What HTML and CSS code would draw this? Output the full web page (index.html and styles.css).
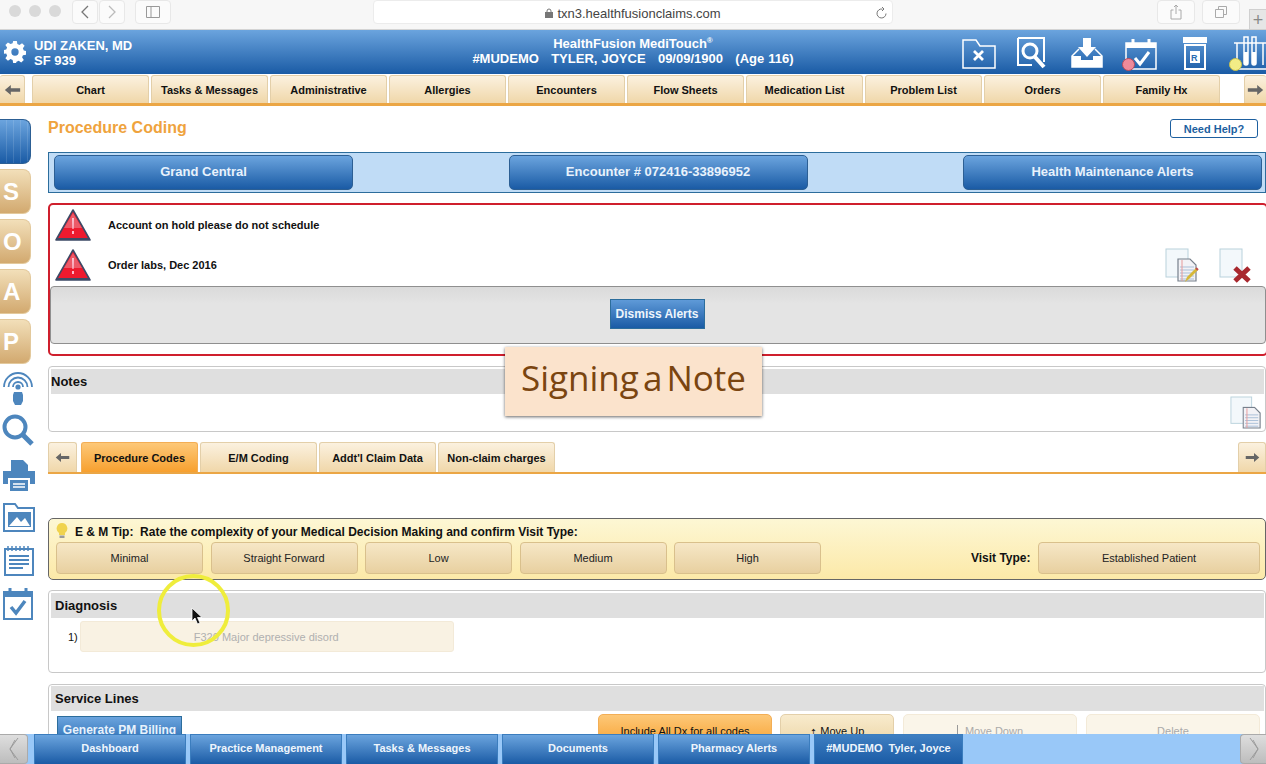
FILE: index.html
```html
<!DOCTYPE html>
<html lang="en">
<head>
  <meta charset="UTF-8" />
  <title>Procedure Coding</title>
  <link rel="stylesheet" href="styles.css">
</head>
<body>
<svg class="defs" width="0" height="0">
  <symbol id="arrow-left" viewBox="0 0 20 14"><path d="M8 1 1 7l7 6V9h11V5H8z"/></symbol>
  <symbol id="arrow-right" viewBox="0 0 20 14"><path d="M12 1l7 6-7 6V9H1V5h11z"/></symbol>
  <symbol id="warn" viewBox="0 0 36 32">
    <path d="M18 1 35 31H1z" fill="#ee1a2e" stroke="#3d4a66" stroke-width="1.600" stroke-linejoin="round"/>
    <path d="M18 4 27 19H9z" fill="#ec5a68"/>
    <path d="M2 29h32l1 2H1z" fill="#3d4a66"/>
    <path d="M17.200 9h1.600l-.3 11h-1zM17.200 22h1.600v3h-1.600z" fill="#fde"/>
  </symbol>
  <symbol id="page" viewBox="0 0 34 36">
    <rect x="1" y="1" width="22" height="28" fill="#f3f8fb" stroke="#b9d2dc"/>
  </symbol>
  <symbol id="sheet" viewBox="0 0 20 24">
    <path d="M1 1h12l6 6v16H1z" fill="#f2f2f6" stroke="#77808c" stroke-width="1.200"/>
    <path d="M3 9h14M3 12h14M3 15h14M3 18h14M3 21h14" stroke="#a9bfd8"/>
    <path d="M5 2v21" stroke="#e79a9a"/>
  </symbol>
</svg>

<div class="page">
  <div class="browser">
    <div class="dots"><i></i><i></i><i></i></div>
    <div class="chrome-btn nav-btn">
      <svg width="10" height="14" viewBox="0 0 10 14"><path d="M8 1 2 7l6 6" fill="none" stroke="#777" stroke-width="1.300"/></svg>
    </div>
    <div class="chrome-btn nav-btn next-btn">
      <svg width="10" height="14" viewBox="0 0 10 14"><path d="M2 1l6 6-6 6" fill="none" stroke="#bbb" stroke-width="1.300"/></svg>
    </div>
    <div class="chrome-btn side-btn">
      <svg width="14" height="12" viewBox="0 0 14 12"><path d="M.5.500h13v11H.5zM5 .5v11" fill="none" stroke="#999"/></svg>
    </div>
    <div class="url">
      <svg width="8" height="10" viewBox="0 0 8 10"><path d="M2 4V3a2 2 0 0 1 4 0v1" fill="none" stroke="#777"/><rect y="4" width="8" height="6" fill="#777"/></svg>
      <span>txn3.healthfusionclaims.com</span>
      <svg class="reload" width="12" height="14" viewBox="0 0 12 14"><path d="M10 7.500a4.500 4.500 0 1 1-3.500-4.400M6 1l2 2-2 2" fill="none" stroke="#777"/></svg>
    </div>
    <div class="chrome-btn share-btn">
      <svg width="12" height="16" viewBox="0 0 12 16"><path d="M3.500 6H1v9h10V6H8.500M6 10V1M4 3l2-2 2 2" fill="none" stroke="#aaa"/></svg>
    </div>
    <div class="chrome-btn tabs-btn">
      <svg width="12" height="12" viewBox="0 0 12 12"><path d="M.5 3.500h8v8h-8zM3.500 3.500v-3h8v8h-3" fill="none" stroke="#aaa"/></svg>
    </div>
    <div class="plus">+</div>
  </div>

  <header class="topbar">
    <div class="user">
      <svg width="22" height="22" viewBox="0 0 24 24"><path fill="#fff" fill-rule="evenodd" d="M10 0h4l.6 3.300 2.300 1L19.700 2.400l2.800 2.800-1.900 2.800 1 2.300L24 10.900v4l-3.300.6-1 2.300 1.900 2.800-2.800 2.800-2.800-1.900-2.300 1L13.100 24H10l-.6-3.300-2.300-1-2.800 1.900-2.800-2.800 1.900-2.800-1-2.300L-.900 14v-4l3.300-.6 1-2.300L1.500 4.300l2.800-2.800 2.800 1.900 2.300-1zM12 8a4 4 0 1 0 0 8 4 4 0 0 0 0-8z"/></svg>
      <div class="user-name">UDI ZAKEN, MD<br>SF 939</div>
    </div>
    <div class="patient">
      <div>HealthFusion MediTouch<sup>®</sup></div>
      <div class="patient-line">#MUDEMO&nbsp;&nbsp; TYLER, JOYCE&nbsp;&nbsp; 09/09/1900&nbsp;&nbsp; (Age 116)</div>
    </div>
    <div class="top-icons">
      <svg class="ti-folder" width="34" height="30" viewBox="0 0 34 30"><path d="M1 1h13l4 6h15v22H1z" fill="none" stroke="#fff" stroke-width="1.500"/><path d="M12 12l9 9m0-9-9 9" stroke="#fff" stroke-width="2.800"/></svg>
      <svg class="ti-search" width="30" height="32" viewBox="0 0 30 32"><path d="M1 1h26v24" fill="none" stroke="#fff" stroke-width="2"/><path d="M1 1v27h14" fill="none" stroke="#fff" stroke-width="2"/><circle cx="13" cy="14" r="7" fill="none" stroke="#fff" stroke-width="3"/><path d="M18 20l9 10" stroke="#fff" stroke-width="4"/></svg>
      <svg class="ti-inbox" width="32" height="30" viewBox="0 0 32 30"><path d="M8 11 1 18v11h30V18l-7-7" fill="none" stroke="#fff" stroke-width="1.500"/><path d="M1 18h9v4h12v-4h9v11H1z" fill="#fff"/><path d="M12 0h8v9h5l-9 10-9-10h5z" fill="#fff"/></svg>
      <svg class="ti-cal" width="32" height="33" viewBox="0 0 32 33"><path d="M1 6h30v26H1z" fill="none" stroke="#fff" stroke-width="1.500"/><path d="M1 6h30v5H1z" fill="#fff"/><path d="M8 2v6M24 2v6" stroke="#fff" stroke-width="3"/><path d="M10 21l5 6 9-12" fill="none" stroke="#fff" stroke-width="3"/></svg>
      <svg class="ti-rx" width="24" height="33" viewBox="0 0 24 33"><path d="M0 0h24v6H0z" fill="#fff"/><path d="M2 8h20v24H2z" fill="none" stroke="#fff" stroke-width="2"/><path d="M7 14h10v12H7z" fill="#fff"/><text x="8" y="24" font-size="9" font-weight="700" fill="#2a6cb2">R</text></svg>
      <svg class="ti-tubes" width="32" height="34" viewBox="0 0 32 34"><path d="M0 7h32M3 7v22M29 7v22M0 33h32" fill="none" stroke="#fff" stroke-width="1.500"/><path d="M10 1h4v26a2 2 0 0 1-4 0zM18 1h4v26a2 2 0 0 1-4 0z" fill="none" stroke="#fff" stroke-width="1.500"/><path d="M10 16h4v11a2 2 0 0 1-4 0zM18 16h4v11a2 2 0 0 1-4 0z" fill="#fff"/></svg>
      <span class="dot dot-red"></span>
      <span class="dot dot-yellow"></span>
    </div>
  </header>

  <nav class="tabs">
    <a class="tab tab-arrow tab-prev"><svg width="17" height="12"><use href="#arrow-left"/></svg></a>
    <a class="tab">Chart</a>
    <a class="tab">Tasks &amp; Messages</a>
    <a class="tab">Administrative</a>
    <a class="tab">Allergies</a>
    <a class="tab">Encounters</a>
    <a class="tab">Flow Sheets</a>
    <a class="tab">Medication List</a>
    <a class="tab">Problem List</a>
    <a class="tab">Orders</a>
    <a class="tab">Family Hx</a>
    <a class="tab tab-arrow tab-next"><svg width="17" height="12"><use href="#arrow-right"/></svg></a>
  </nav>

  <div class="workspace">
    <aside class="sidebar">
      <div class="side-key side-key-blue"></div>
      <div class="side-key">S</div>
      <div class="side-key">O</div>
      <div class="side-key">A</div>
      <div class="side-key">P</div>
      <svg class="side-icon" width="32" height="35" viewBox="0 0 32 35"><path d="M2 16a14 14 0 0 1 28 0M6.500 16a9.500 9.500 0 0 1 19 0M11 16a5 5 0 0 1 10 0" fill="none" stroke="#4d86bd" stroke-width="1.800"/><circle cx="16" cy="16" r="2.600" fill="#4d86bd"/><path d="M12 21h8l1 3v6l-2 4h-6l-2-4v-6z" fill="#4d86bd"/></svg>
      <svg class="side-icon" width="32" height="32" viewBox="0 0 32 32"><circle cx="13" cy="13" r="10.500" fill="none" stroke="#4d86bd" stroke-width="4"/><path d="M20 20l10 10" stroke="#4d86bd" stroke-width="5"/></svg>
      <svg class="side-icon" width="32" height="32" viewBox="0 0 32 32"><path d="M8 1h12l5 5v6H8z" fill="#4d86bd"/><path d="M0 12h32v13h-5v-6H5v6H0z" fill="#4d86bd"/><path d="M7 21h18v11H7z" fill="#4d86bd"/><path d="M10 25h12M10 28h12" stroke="#fff" stroke-width="1.500"/></svg>
      <svg class="side-icon" width="32" height="29" viewBox="0 0 32 29"><path d="M1 1h11l3 4h16v23H1z" fill="none" stroke="#4d86bd" stroke-width="2"/><path d="M5 9h23v15H5z" fill="#4d86bd"/><path d="M6 23l8-9 4 5 4-4 5 8z" fill="#fff"/></svg>
      <svg class="side-icon" width="30" height="31" viewBox="0 0 30 31"><path d="M1 4h28v26H1z" fill="none" stroke="#4d86bd" stroke-width="2"/><path d="M4 1v5M8 1v5M12 1v5M16 1v5M20 1v5M24 1v5" stroke="#4d86bd" stroke-width="1.500"/><path d="M5 11h20M5 15h20M5 19h20M5 23h14" stroke="#4d86bd" stroke-width="2"/></svg>
      <svg class="side-icon" width="30" height="33" viewBox="0 0 30 33"><path d="M1 5h28v27H1z" fill="none" stroke="#4d86bd" stroke-width="2"/><path d="M1 5h28v5H1z" fill="#4d86bd"/><path d="M7 1v7M23 1v7" stroke="#4d86bd" stroke-width="3"/><path d="M8 20l5 6 9-12" fill="none" stroke="#4d86bd" stroke-width="3.500"/></svg>
    </aside>

    <main class="content">
      <div class="title-row">
        <h1>Procedure Coding</h1>
        <a class="help">Need Help?</a>
      </div>

      <div class="strip">
        <a class="blue-btn">Grand Central</a>
        <a class="blue-btn">Encounter # 072416-33896952</a>
        <a class="blue-btn">Health Maintenance Alerts</a>
      </div>

      <section class="alerts">
        <div class="alert-row">
          <svg width="36" height="32"><use href="#warn"/></svg>
          <b>Account on hold please do not schedule</b>
        </div>
        <div class="alert-row">
          <svg width="36" height="32"><use href="#warn"/></svg>
          <b>Order labs, Dec 2016</b>
          <div class="alert-tools">
            <svg width="34" height="36" viewBox="0 0 34 36">
              <use href="#page" width="34" height="36"/>
              <svg x="12" y="10" width="20" height="24"><use href="#sheet"/></svg>
              <path d="M20 34l2-5 9-9 2 2-9 9z" fill="#d6b83a"/>
              <path d="M31 20l2 2" stroke="#c04a4a" stroke-width="2"/>
            </svg>
            <svg width="34" height="36" viewBox="0 0 34 36">
              <use href="#page" width="34" height="36"/>
              <path d="M16 20l14 13M30 20 16 33" stroke="#a8282e" stroke-width="5"/>
            </svg>
          </div>
        </div>
        <div class="dismiss-panel"><a class="dismiss">Dismiss Alerts</a></div>
      </section>

      <section class="box notes">
        <h2 class="box-head notes-head">Notes</h2>
        <div class="notes-tool">
          <svg width="32" height="36" viewBox="0 0 34 36">
            <use href="#page" width="34" height="36"/>
            <svg x="13" y="11" width="20" height="24"><use href="#sheet"/></svg>
          </svg>
        </div>
      </section>

      <nav class="subtabs">
        <a class="subtab sub-arrow"><svg width="15" height="11"><use href="#arrow-left"/></svg></a>
        <a class="subtab sub-active">Procedure Codes</a>
        <a class="subtab">E/M Coding</a>
        <a class="subtab">Addt'l Claim Data</a>
        <a class="subtab">Non-claim charges</a>
        <a class="subtab sub-arrow sub-next"><svg width="15" height="11"><use href="#arrow-right"/></svg></a>
      </nav>

      <section class="tip">
        <div class="tip-text">
          <svg width="12" height="15" viewBox="0 0 12 15"><path d="M6 0a5.500 5.500 0 0 1 3 10v2H3v-2A5.500 5.500 0 0 1 6 0z" fill="#f0d34e"/><path d="M3.500 12.500h5V15h-5z" fill="#9a9a9a"/></svg>
          <b>E &amp; M Tip:&nbsp; Rate the complexity of your Medical Decision Making and confirm Visit Type:</b>
        </div>
        <div class="tip-row">
          <a class="tan-btn">Minimal</a>
          <a class="tan-btn">Straight Forward</a>
          <a class="tan-btn">Low</a>
          <a class="tan-btn">Medium</a>
          <a class="tan-btn">High</a>
          <b class="visit-label">Visit Type:</b>
          <a class="tan-btn visit-btn">Established Patient</a>
        </div>
      </section>

      <section class="box diagnosis">
        <h2 class="box-head">Diagnosis</h2>
        <div class="dx-row">
          <span>1)</span>
          <div class="dx-field">F320 Major depressive disord</div>
        </div>
      </section>

      <section class="box service">
        <h2 class="box-head">Service Lines</h2>
        <div class="service-row">
          <a class="pm-btn">Generate PM Billing</a>
          <a class="act-btn act-orange">Include All Dx for all codes</a>
          <a class="act-btn act-move"><span class="move-arrow">↑</span> Move Up</a>
          <a class="act-btn act-off"><span class="move-bar"></span>Move Down</a>
          <a class="act-btn act-off">Delete</a>
        </div>
      </section>
    </main>
  </div>

  <footer class="bottombar">
    <a class="bar-arrow"><svg width="12" height="24" viewBox="0 0 12 24"><path d="M10 1 2 12l8 11M7 3 2 12l5 9" fill="none" stroke="#9c9c9c"/></svg></a>
    <a class="bar-tab">Dashboard</a>
    <a class="bar-tab">Practice Management</a>
    <a class="bar-tab">Tasks &amp; Messages</a>
    <a class="bar-tab">Documents</a>
    <a class="bar-tab">Pharmacy Alerts</a>
    <a class="bar-tab bar-current">#MUDEMO&nbsp; Tyler, Joyce</a>
    <a class="bar-arrow bar-next"><svg width="12" height="24" viewBox="0 0 12 24"><path d="M2 1l8 11-8 11M5 3l5 9-5 9" fill="none" stroke="#9c9c9c"/></svg></a>
  </footer>

  <div class="caption">Signing a Note</div>
  <div class="click-ring"></div>
  <svg class="cursor" width="12" height="18" viewBox="0 0 12 18"><path d="M1 1v13l3-3 2.500 6 2.500-1-2.500-5.500H11z" fill="#111" stroke="#fff" stroke-width=".8"/></svg>
</div>
</body>
</html>
```

FILE: styles.css
```css
* {
  box-sizing: border-box;
}

body {
  margin: 0;
  font-family: "Liberation Sans", Arial, sans-serif;
  font-size: 11px;
  color: #111;
  background: #fff;
}

a {
  display: flex;
  align-items: center;
  justify-content: center;
}

.defs {
  position: absolute;
}

.page {
  position: relative;
  height: 764px;
  overflow: hidden;
  display: flex;
  flex-direction: column;
}

/* browser chrome */
.browser {
  height: 30px;
  flex: none;
  display: flex;
  align-items: flex-start;
  background: #f7f7f7;
  border-bottom: 1px solid #d4d4d4;
}

.dots {
  display: flex;
  gap: 8px;
  margin: 5px 0 0 9px;
}

.dots i {
  width: 12px;
  height: 12px;
  border-radius: 50%;
  background: #d9d9d9;
}

.chrome-btn {
  height: 24px;
  display: flex;
  align-items: center;
  justify-content: center;
  background: #fbfbfb;
  border: 1px solid #e8e8e8;
  border-radius: 4px;
}

.nav-btn {
  width: 26px;
  margin-left: 1px;
}

.browser .dots + .nav-btn {
  margin-left: 11px;
}

.side-btn {
  width: 36px;
  margin-left: 10px;
}

.url {
  width: 522px;
  height: 24px;
  margin-left: 202px;
  padding-top: 2px;
  position: relative;
  display: flex;
  align-items: center;
  justify-content: center;
  gap: 4px;
  background: #fff;
  border: 1px solid #ececec;
  border-radius: 4px;
  font-size: 13px;
  color: #444;
}

.reload {
  position: absolute;
  right: 4px;
  top: 5px;
}

.share-btn {
  width: 38px;
  margin-left: 264px;
}

.tabs-btn {
  width: 38px;
  margin-left: 7px;
}

.plus {
  margin: 9px 0 0 9px;
  width: 17px;
  height: 21px;
  background: #e6e6e6;
  border: 1px solid #d0d0d0;
  border-right: 0;
  font-size: 18px;
  line-height: 20px;
  text-align: center;
  color: #888;
}

/* header */
.topbar {
  height: 44px;
  flex: none;
  display: grid;
  grid-template-columns: 1fr auto 1fr;
  align-items: center;
  background: linear-gradient(#6ba4de, #1a5ba5);
  color: #fff;
  font-weight: 700;
  font-size: 13px;
}

.user {
  display: flex;
  align-items: center;
  gap: 8px;
  padding-left: 4px;
}

.user-name {
  padding-top: 1px;
  line-height: 15px;
}

.patient {
  text-align: center;
  line-height: 15px;
  padding-bottom: 3px;
}

.patient sup {
  font-size: 8px;
  line-height: 0;
}

.patient-line {
  white-space: nowrap;
  word-spacing: .5px;
}

.top-icons {
  position: relative;
  height: 44px;
  display: flex;
  align-items: center;
  justify-content: flex-end;
}

.ti-folder {
  margin-top: 4px;
}

.ti-search {
  margin-left: 21px;
  margin-top: 2px;
}

.ti-inbox {
  margin-left: 24px;
  margin-top: 2px;
}

.ti-cal {
  margin-left: 22px;
  margin-top: 2px;
}

.ti-rx {
  margin-left: 26px;
  margin-top: 2px;
}

.ti-tubes {
  margin-left: 27px;
  margin-top: 2px;
  margin-right: 0;
}

.dot {
  position: absolute;
  width: 13px;
  height: 13px;
  border-radius: 50%;
  top: 28px;
}

.dot-red {
  right: 131px;
  background: #ee8a9a;
  border: 1px solid #b84a5a;
}

.dot-yellow {
  right: 24px;
  background: #f2ec86;
  border: 1px solid #c8c04a;
}

/* chart tabs */
.tabs {
  height: 32px;
  flex: none;
  display: flex;
  gap: 2px;
  align-items: flex-start;
  padding-top: 1px;
  border-bottom: 3px solid #eba645;
  background: #fff;
}

.tab {
  width: 117px;
  height: 28px;
  padding-top: 1px;
  background: linear-gradient(#fbf1df, #f0d7a9);
  border: 1px solid #e3cfa9;
  border-bottom: 0;
  border-radius: 3px 3px 0 0;
  font-weight: 700;
  font-size: 11px;
  color: #111;
}

.tab svg {
  fill: #666;
}

.tab-prev {
  width: 25px;
  margin-right: 5px;
  margin-left: 0;
  border-left: 0;
}

.tab-next {
  width: 22px;
  margin-left: 22px;
  border-right: 0;
}

/* workspace */
.workspace {
  flex: 1;
  min-height: 0;
  display: flex;
  overflow: hidden;
}

.sidebar {
  width: 48px;
  flex: none;
  display: flex;
  flex-direction: column;
  align-items: flex-start;
  padding-top: 13px;
}

.side-key {
  width: 31px;
  height: 45px;
  margin-bottom: 5px;
  display: flex;
  align-items: center;
  padding-left: 3px;
  background: linear-gradient(#f2dfb9, #d2a96f);
  border: 1px solid #e3c99c;
  border-left: 0;
  border-radius: 0 8px 8px 0;
  color: #fff;
  font-weight: 700;
  font-size: 24px;
}

.side-key-blue {
  background: repeating-linear-gradient(90deg, transparent 0 6px, rgba(255,255,255,.12) 6px 7px), linear-gradient(#6ba4de, #1a5ba5);
  border: 1px solid #2c5f94;
  border-left: 0;
}

.side-icon {
  flex: none;
  display: block;
  margin: 2px 0 0 2px;
}

.side-icon:nth-of-type(2) {
  margin-top: 8px;
}

.side-icon:nth-of-type(3) {
  margin-top: 13px;
  margin-left: 3px;
}

.side-icon:nth-of-type(4) {
  margin-top: 12px;
  margin-left: 3px;
}

.side-icon:nth-of-type(5) {
  margin-top: 13px;
  margin-left: 4px;
}

.side-icon:nth-of-type(6) {
  margin-top: 11px;
  margin-left: 3px;
}

/* main */
.content {
  flex: 1;
  min-width: 0;
}

.title-row {
  height: 46px;
  display: flex;
  justify-content: space-between;
  align-items: flex-start;
  padding-top: 13px;
}

h1 {
  margin: 0;
  font-size: 16px;
  line-height: 17px;
  color: #efa33d;
}

.help {
  width: 88px;
  height: 19px;
  margin-right: 8px;
  border: 1px solid #1d5f9f;
  border-radius: 3px;
  color: #1d5f9f;
  font-weight: 700;
  font-size: 11px;
}

.strip {
  height: 41px;
  display: flex;
  justify-content: space-between;
  align-items: center;
  padding: 0 3px 0 5px;
  background: #c0dcf6;
  border: 1px solid #2c6d9c;
}

.blue-btn {
  width: 299px;
  height: 35px;
  padding-bottom: 2px;
  background: linear-gradient(#6ba4de, #1a5ba5);
  border: 1px solid #2c5f94;
  border-radius: 5px;
  color: #e8f2fc;
  font-weight: 700;
  font-size: 13px;
}

.alerts {
  height: 153px;
  margin: 10px -2px 0 0;
  padding: 4px 0 0;
  border: 2px solid #cf1f2d;
  border-radius: 5px;
}

.alert-row {
  height: 40px;
  display: flex;
  align-items: center;
  gap: 17px;
  padding: 0 0 8px 5px;
  font-size: 11px;
  position: relative;
}

.alert-tools {
  margin-left: auto;
  margin-right: 13px;
  margin-top: 2px;
  display: flex;
  gap: 20px;
}

.dismiss-panel {
  height: 58px;
  margin-top: -3px;
  padding-bottom: 2px;
  display: flex;
  align-items: center;
  justify-content: center;
  background: linear-gradient(#dadada, #e4e4e4 30%);
  border: 1px solid #8f8f8f;
  border-radius: 4px;
}

.dismiss {
  width: 95px;
  height: 30px;
  margin-left: -2px;
  background: linear-gradient(#5f9ad8, #1a5ba5);
  border: 1px solid #2c6d9c;
  color: #eef5fc;
  font-weight: 700;
  font-size: 12px;
}

.box {
  margin-top: 10px;
  padding: 2px 1px 0 2px;
  border: 1px solid #c8c8c8;
  border-radius: 4px;
}

.box-head {
  margin: 0;
  height: 25px;
  padding-left: 4px;
  background: #dfdfdf;
  font-size: 13px;
  line-height: 25px;
  color: #111;
}

.notes {
  height: 66px;
}

.notes-head {
  padding-left: 0;
}

.notes-tool {
  display: flex;
  justify-content: flex-end;
  padding: 1px 2px 0 0;
}

.subtabs {
  height: 32px;
  margin-top: 10px;
  display: flex;
  gap: 2px;
  border-bottom: 2px solid #eba645;
}

.subtab {
  width: 117px;
  height: 30px;
  background: linear-gradient(#fbf1df, #f0d7a9);
  border: 1px solid #e3cfa9;
  border-bottom: 0;
  border-radius: 3px 3px 0 0;
  font-weight: 700;
  font-size: 11px;
}

.subtab svg {
  fill: #666;
}

.sub-arrow {
  width: 29px;
  margin-right: 2px;
}

.sub-next {
  width: 28px;
  margin: 0 0 0 auto;
}

.sub-active {
  background: linear-gradient(#fdc878, #f7a02f);
  border-color: #f3ae55;
}

.tip {
  height: 62px;
  margin-top: 44px;
  padding: 0 5px 0 7px;
  background: linear-gradient(#fdf7d4, #fce9a8);
  border: 1px solid #666;
  border-radius: 5px;
}

.tip-text {
  height: 23px;
  padding-top: 3px;
  display: flex;
  align-items: center;
  gap: 7px;
  font-size: 12px;
}

.tip-text svg {
  margin-top: -4px;
}

.tip-row {
  display: flex;
  align-items: center;
  gap: 7.500px;
}

.tan-btn {
  width: 147px;
  height: 32px;
  background: linear-gradient(#f6e7c6, #e8d0a0);
  border: 1px solid #d9c08c;
  border-radius: 4px;
  color: #222;
  font-size: 11px;
}

.visit-label {
  margin-left: auto;
  font-size: 12px;
}

.visit-btn {
  width: 222px;
}

.diagnosis {
  height: 83px;
}

.dx-row {
  display: flex;
  align-items: center;
  gap: 2px;
  padding: 3px 0 0 17px;
}

.dx-field {
  width: 374px;
  height: 31px;
  padding-left: 113px;
  line-height: 30px;
  background: #f9f2e3;
  border: 1px solid #f3ead8;
  border-radius: 3px;
  color: #b0b0b0;
}

.service {
  height: 90px;
  margin-top: 11px;
  padding-top: 1px;
}

.service-row {
  display: flex;
  align-items: flex-start;
  gap: 8px;
  padding: 3px 4px 0 6px;
}

.pm-btn {
  width: 125px;
  height: 28px;
  margin-right: auto;
  margin-top: 2px;
  background: linear-gradient(#6ba4de, #2a6cb2);
  border: 1px solid #2c6d9c;
  color: #e8f2fc;
  font-weight: 700;
  font-size: 12px;
}

.act-btn {
  width: 174px;
  height: 34px;
  border: 1px solid #e3cfa9;
  border-radius: 5px;
}

.act-orange {
  margin-left: 1px;
  background: linear-gradient(#fdc878, #f7a02f);
  border-color: #f3ae55;
}

.act-move {
  width: 114px;
  gap: 3px;
  background: linear-gradient(#f8ebcd, #ecd4a4);
}

.move-arrow {
  font-size: 15px;
  line-height: 11px;
}

.move-bar {
  width: 1px;
  height: 12px;
  margin-right: 7px;
  background: #999;
}

.act-off {
  margin-left: 1px;
  background: #faf5e9;
  border-color: #f3ead8;
  color: #aaa;
}

/* bottom tabs */
.bottombar {
  height: 30px;
  flex: none;
  display: flex;
  gap: 4px;
  background: #99c8f8;
}

.bar-arrow {
  width: 28px;
  margin-right: 2px;
  background: linear-gradient(#dedede, #bdbdbd);
  border: 1px solid #aaa;
  border-left: 0;
  border-radius: 0 4px 4px 0;
}

.bar-next {
  width: 26px;
  margin: 0 0 0 auto;
  border: 1px solid #aaa;
  border-right: 0;
  border-radius: 4px 0 0 4px;
}

.bar-tab {
  width: 152px;
  padding-bottom: 3px;
  background: linear-gradient(#6ba4de, #1a5ba5);
  border: 1px solid #3b7dbe;
  border-bottom: 0;
  color: #eef5fc;
  font-weight: 700;
}

.bar-current {
  width: 149px;
  background: linear-gradient(#3f7fc2, #1a5ba5);
}

/* video overlays */
.caption {
  position: absolute;
  left: 505px;
  top: 347px;
  width: 257px;
  height: 69px;
  background: #fbe3cc;
  box-shadow: 0 1px 3px rgba(0, 0, 0, .6);
  text-align: center;
  font-family: "Open Sans", sans-serif;
  font-size: 35px;
  line-height: 62px;
  word-spacing: -5px;
  color: #7a4510;
}

.click-ring {
  position: absolute;
  left: 157px;
  top: 574px;
  width: 73px;
  height: 73px;
  border: 4px solid #efed3c;
  border-radius: 50%;
}

.cursor {
  position: absolute;
  left: 191px;
  top: 607px;
}
```
